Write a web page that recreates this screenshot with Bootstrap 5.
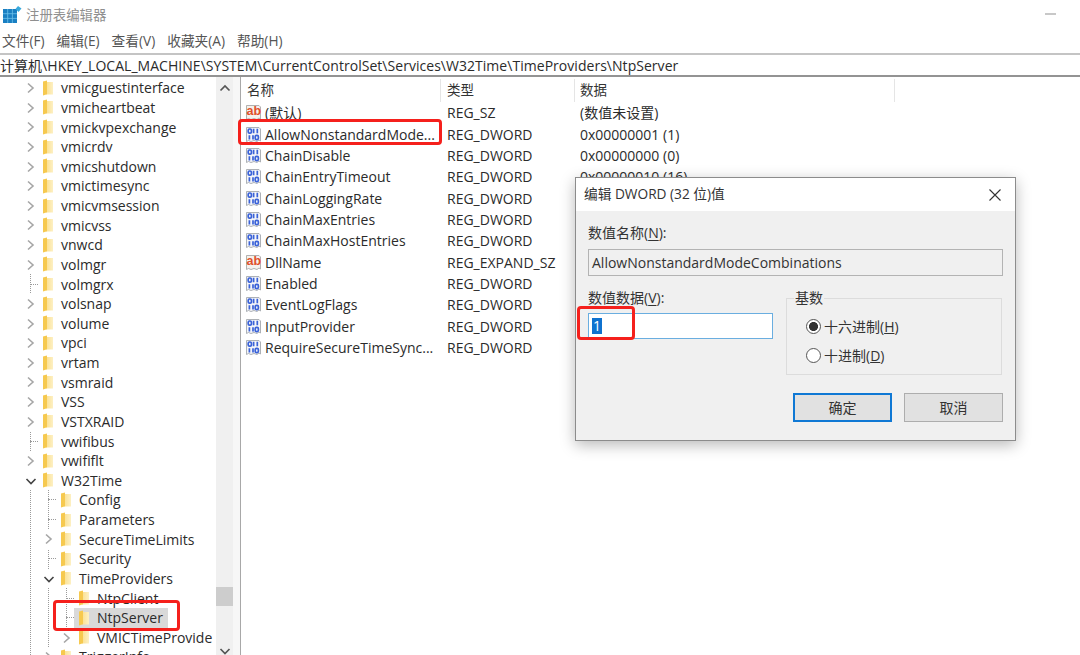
<!DOCTYPE html>
<html lang="zh">
<head>
<meta charset="utf-8">
<link href="https://cdn.jsdelivr.net/npm/bootstrap@5.3.0/dist/css/bootstrap.min.css" rel="stylesheet">
<style>
html,body{height:655px;overflow:hidden;background:#fff;}
body{font-family:"Open Sans","Noto Sans CJK SC",sans-serif;font-size:14px;color:#2b2b2b;position:relative;}
.titlebar{height:30px;padding-left:3px;color:#8f8f8f;font-size:13.4px;}
.minbtn{width:11px;border-top:2px solid #c8c8c8;margin-right:24px;margin-bottom:3px;}
.menubar{height:23px;padding-left:2px;font-size:13.7px;color:#555;gap:12px;}
.addr{height:24px;border-top:2px solid #c4c4c4;border-bottom:2px solid #939393;font-size:14px;white-space:nowrap;overflow:hidden;line-height:21px;letter-spacing:.035px;}
.main{height:578px;overflow:hidden;}
.treepane{width:216px;overflow:hidden;flex:none;padding-top:1px;}
.tgroup{margin-left:30px;border-left:1px dotted #9a9a9a;}
.tkids{margin-left:17px;border-left:1px dotted #9a9a9a;}
.trow{height:19.63px;white-space:nowrap;color:#2b2b2b;}
.twisty{width:14px;height:100%;margin-left:-7px;margin-right:5px;background:#fff;flex:none;}
.twisty.plain{background:transparent;justify-content:flex-end!important;}
.stub{display:block;width:8px;border-top:1px dotted #9a9a9a;}
.fold{width:10px;height:16px;flex:none;margin-right:8px;}
.sel-back{background:#d9d9d9;padding-left:5px;margin-left:-5px;width:94px;flex:none;}
.sbar{width:17px;background:#f0f0f0;flex:none;}
.sthumb{height:19px;background:#cdcdcd;margin-top:auto;margin-bottom:49px;}
.splitter{width:8px;flex:none;border-right:1px solid #a8a8a8;background:#f7f7f7;}
.listpane{min-width:0;padding-top:2px;}
.lhead{height:23px;color:#333;font-size:13.5px;}
.lcol1{width:200px;flex:none;padding-left:6px;border-right:1px solid #e5e5e5;}
.lcol2{width:134px;flex:none;padding-left:6px;border-right:1px solid #e5e5e5;}
.lcol3{width:320px;flex:none;padding-left:5px;border-right:1px solid #e5e5e5;}
.lhead>div{height:100%;}
.lrow{height:21.37px;white-space:nowrap;}
.lname{width:200px;flex:none;padding-left:4px;overflow:hidden;}
.ltype{width:134px;flex:none;padding-left:6px;}
.ldata{padding-left:5px;}
.ico{width:17px;height:17px;flex:none;margin-right:3px;}
.dlg{position:absolute;left:575px;top:177px;width:441px;height:264px;background:#f0f0f0;border:1px solid #8c8c8c;box-shadow:0 4px 14px rgba(0,0,0,.28);font-size:14px;color:#333;}
.dlg-title{height:33px;background:#fff;padding:0 14px 0 8px;font-size:13.7px;flex:none;}
.dlg-body{padding:13px 12px 0;}
.lab{font-size:14px;line-height:18px;}
.lab u{text-underline-offset:2px;}
.fname{height:27px;border:1px solid #b3b3b3;background:#f0f0f0;padding-left:3px;line-height:25px;margin-top:7px;}
.valrow{margin-top:13px;}
.fval{width:185px;height:26px;border:1px solid #6aaee0;background:#fff;padding-left:3px;margin-top:6px;}
.hi{background:#0f72cf;color:#fff;line-height:16px;padding:0 1px;}
.basebox{width:216px;height:77px;border:1px solid #dcdcdc;position:relative;margin-left:13px;margin-top:9px;padding:12.5px 0 0 19px;}
.baselegend{position:absolute;left:7px;top:-9px;background:#f0f0f0;padding:0 1px;font-size:14px;line-height:16px;}
.rad{height:29px;font-size:14px;gap:3px;}
.dot{width:15px;height:15px;border-radius:50%;border:1px solid #555;background:#fff;flex:none;}
.dot.on{background:radial-gradient(circle,#333 0 4.2px,#fff 4.8px);}
.btnrow{margin-top:18px;gap:12px;}
.dbtn{width:99px;height:29px;background:#e1e1e1;border:1px solid #adadad;font-size:14px;}
.dbtn.pri{border:2px solid #0f78d4;}
.redbox{position:absolute;border:3px solid #f5201c;border-radius:4px;pointer-events:none;}
</style>
</head>
<body>
<svg width="0" height="0" class="d-block position-absolute">
<defs>
<linearGradient id="fg" x1="0" x2="1" y1="0" y2="0"><stop offset="0" stop-color="#fbe08f"/><stop offset="1" stop-color="#fdf0c4"/></linearGradient>
<symbol id="folder" viewBox="0 0 10 16"><rect x="3" y="2" width="7" height="12.5" fill="url(#fg)"/><path d="M0 1.5 L4 .5 V14.2 L0 15.5Z" fill="#f6c94f"/></symbol>
<symbol id="chr" viewBox="0 0 14 20"><path d="M4 5.5 L9 10 L4 14.5" fill="none" stroke="#a6a6a6" stroke-width="1.6"/></symbol>
<symbol id="chd" viewBox="0 0 14 20"><path d="M2.5 8 L7 12.5 L11.5 8" fill="none" stroke="#444" stroke-width="1.6"/></symbol>
<symbol id="bin" viewBox="0 0 17 17"><path d="M1.5 1.5 H14 L15.5 3 V15 L14 14 L12 15.5 L9 14.5 L6 15.5 L3.5 14.5 L1.5 15.5Z" fill="#f4f5f8" stroke="#a4a8ae" stroke-width=".9"/><g fill="none" stroke="#3a62d8" stroke-width="1.7"><rect x="3.2" y="3" width="3.2" height="4.2" rx="1.3"/><path d="M8.6 2.8 V7.3 M12.3 2.8 V7.3"/><path d="M4.4 9.3 V13.6 M8 9.3 V13.6"/><rect x="10.2" y="9.4" width="3.2" height="4.2" rx="1.3"/></g></symbol>
<symbol id="ab" viewBox="0 0 17 17"><path d="M1.5 1.5 H14 L15.5 3 V15 L14 14 L12 15.5 L9 14.5 L6 15.5 L3.5 14.5 L1.5 15.5Z" fill="#f4f1ee" stroke="#a8a8a8" stroke-width=".9"/><text x="1.6" y="10.5" font-family="Liberation Sans,sans-serif" font-size="12.5" font-weight="700" fill="#e0502a">ab</text></symbol>
</defs>
</svg>

<div class="titlebar d-flex align-items-center">
<svg width="19" height="20" viewBox="0 0 19 20" class="me-1 flex-none"><rect x="0" y="4" width="14" height="14" fill="#1a7fc2"/><path d="M4.7 4 V18 M9.4 4 V18 M0 8.7 H14 M0 13.4 H14" stroke="#6cc0ea" stroke-width=".8"/><path d="M15 1 L18.5 3.5 L15.5 7 L12.5 4Z" fill="#38a9dc"/></svg>
<span>注册表编辑器</span>
<span class="ms-auto d-block minbtn"></span>
</div>
<div class="menubar d-flex align-items-center">
<span>文件(F)</span><span>编辑(E)</span><span>查看(V)</span><span>收藏夹(A)</span><span>帮助(H)</span>
</div>
<div class="addr">计算机\HKEY_LOCAL_MACHINE\SYSTEM\CurrentControlSet\Services\W32Time\TimeProviders\NtpServer</div>

<div class="main d-flex">
<div class="treepane">
<div class="tgroup">
<div class="trow d-flex align-items-center"><span class="twisty d-flex"><svg width="14" height="20"><use href="#chr"/></svg></span><svg class="fold"><use href="#folder"/></svg>vmicguestinterface</div>
<div class="trow d-flex align-items-center"><span class="twisty d-flex"><svg width="14" height="20"><use href="#chr"/></svg></span><svg class="fold"><use href="#folder"/></svg>vmicheartbeat</div>
<div class="trow d-flex align-items-center"><span class="twisty d-flex"><svg width="14" height="20"><use href="#chr"/></svg></span><svg class="fold"><use href="#folder"/></svg>vmickvpexchange</div>
<div class="trow d-flex align-items-center"><span class="twisty d-flex"><svg width="14" height="20"><use href="#chr"/></svg></span><svg class="fold"><use href="#folder"/></svg>vmicrdv</div>
<div class="trow d-flex align-items-center"><span class="twisty d-flex"><svg width="14" height="20"><use href="#chr"/></svg></span><svg class="fold"><use href="#folder"/></svg>vmicshutdown</div>
<div class="trow d-flex align-items-center"><span class="twisty d-flex"><svg width="14" height="20"><use href="#chr"/></svg></span><svg class="fold"><use href="#folder"/></svg>vmictimesync</div>
<div class="trow d-flex align-items-center"><span class="twisty d-flex"><svg width="14" height="20"><use href="#chr"/></svg></span><svg class="fold"><use href="#folder"/></svg>vmicvmsession</div>
<div class="trow d-flex align-items-center"><span class="twisty d-flex"><svg width="14" height="20"><use href="#chr"/></svg></span><svg class="fold"><use href="#folder"/></svg>vmicvss</div>
<div class="trow d-flex align-items-center"><span class="twisty d-flex"><svg width="14" height="20"><use href="#chr"/></svg></span><svg class="fold"><use href="#folder"/></svg>vnwcd</div>
<div class="trow d-flex align-items-center"><span class="twisty d-flex"><svg width="14" height="20"><use href="#chr"/></svg></span><svg class="fold"><use href="#folder"/></svg>volmgr</div>
<div class="trow d-flex align-items-center"><span class="twisty plain d-flex align-items-center"><span class="stub"></span></span><svg class="fold"><use href="#folder"/></svg>volmgrx</div>
<div class="trow d-flex align-items-center"><span class="twisty d-flex"><svg width="14" height="20"><use href="#chr"/></svg></span><svg class="fold"><use href="#folder"/></svg>volsnap</div>
<div class="trow d-flex align-items-center"><span class="twisty d-flex"><svg width="14" height="20"><use href="#chr"/></svg></span><svg class="fold"><use href="#folder"/></svg>volume</div>
<div class="trow d-flex align-items-center"><span class="twisty d-flex"><svg width="14" height="20"><use href="#chr"/></svg></span><svg class="fold"><use href="#folder"/></svg>vpci</div>
<div class="trow d-flex align-items-center"><span class="twisty d-flex"><svg width="14" height="20"><use href="#chr"/></svg></span><svg class="fold"><use href="#folder"/></svg>vrtam</div>
<div class="trow d-flex align-items-center"><span class="twisty d-flex"><svg width="14" height="20"><use href="#chr"/></svg></span><svg class="fold"><use href="#folder"/></svg>vsmraid</div>
<div class="trow d-flex align-items-center"><span class="twisty d-flex"><svg width="14" height="20"><use href="#chr"/></svg></span><svg class="fold"><use href="#folder"/></svg>VSS</div>
<div class="trow d-flex align-items-center"><span class="twisty d-flex"><svg width="14" height="20"><use href="#chr"/></svg></span><svg class="fold"><use href="#folder"/></svg>VSTXRAID</div>
<div class="trow d-flex align-items-center"><span class="twisty plain d-flex align-items-center"><span class="stub"></span></span><svg class="fold"><use href="#folder"/></svg>vwifibus</div>
<div class="trow d-flex align-items-center"><span class="twisty d-flex"><svg width="14" height="20"><use href="#chr"/></svg></span><svg class="fold"><use href="#folder"/></svg>vwififlt</div>
<div class="trow d-flex align-items-center"><span class="twisty d-flex"><svg width="14" height="20"><use href="#chd"/></svg></span><svg class="fold"><use href="#folder"/></svg>W32Time</div>
<div class="tkids">
<div class="trow d-flex align-items-center"><span class="twisty plain d-flex align-items-center"><span class="stub"></span></span><svg class="fold"><use href="#folder"/></svg>Config</div>
<div class="trow d-flex align-items-center"><span class="twisty plain d-flex align-items-center"><span class="stub"></span></span><svg class="fold"><use href="#folder"/></svg>Parameters</div>
<div class="trow d-flex align-items-center"><span class="twisty d-flex"><svg width="14" height="20"><use href="#chr"/></svg></span><svg class="fold"><use href="#folder"/></svg>SecureTimeLimits</div>
<div class="trow d-flex align-items-center"><span class="twisty plain d-flex align-items-center"><span class="stub"></span></span><svg class="fold"><use href="#folder"/></svg>Security</div>
<div class="trow d-flex align-items-center"><span class="twisty d-flex"><svg width="14" height="20"><use href="#chd"/></svg></span><svg class="fold"><use href="#folder"/></svg>TimeProviders</div>
<div class="tkids">
<div class="trow d-flex align-items-center"><span class="twisty plain d-flex align-items-center"><span class="stub"></span></span><svg class="fold"><use href="#folder"/></svg>NtpClient</div>
<div class="trow d-flex align-items-center"><span class="twisty plain d-flex align-items-center"><span class="stub"></span></span><span class="sel-back d-flex align-items-center h-100"><svg class="fold"><use href="#folder"/></svg>NtpServer</span></div>
<div class="trow d-flex align-items-center"><span class="twisty d-flex"><svg width="14" height="20"><use href="#chr"/></svg></span><svg class="fold"><use href="#folder"/></svg>VMICTimeProvide</div>
</div>
<div class="trow d-flex align-items-center"><span class="twisty d-flex"><svg width="14" height="20"><use href="#chr"/></svg></span><svg class="fold"><use href="#folder"/></svg>TriggerInfo</div>
</div>
</div>
</div>
<div class="sbar d-flex flex-column align-items-center">
<svg width="12" height="21" viewBox="0 0 12 21" class="flex-none"><path d="M1.5 13.5 L6 9 L10.5 13.5" fill="none" stroke="#555" stroke-width="1.7"/></svg>
<div class="sthumb w-100"></div>
<svg width="12" height="9" viewBox="0 0 12 9" class="flex-none position-absolute" style="bottom:0"><path d="M1.5 3 L6 7.5 L10.5 3" fill="none" stroke="#555" stroke-width="1.7"/></svg>
</div>
<div class="splitter"></div>
<div class="listpane flex-grow-1">
<div class="lhead d-flex align-items-center">
<div class="lcol1 d-flex align-items-center">名称</div>
<div class="lcol2 d-flex align-items-center">类型</div>
<div class="lcol3 d-flex align-items-center">数据</div>
</div>
<div class="lrow d-flex align-items-center"><div class="lname d-flex align-items-center"><svg class="ico"><use href="#ab"/></svg>(默认)</div><div class="ltype">REG_SZ</div><div class="ldata">(数值未设置)</div></div>
<div class="lrow d-flex align-items-center"><div class="lname d-flex align-items-center"><svg class="ico"><use href="#bin"/></svg>AllowNonstandardMode...</div><div class="ltype">REG_DWORD</div><div class="ldata">0x00000001 (1)</div></div>
<div class="lrow d-flex align-items-center"><div class="lname d-flex align-items-center"><svg class="ico"><use href="#bin"/></svg>ChainDisable</div><div class="ltype">REG_DWORD</div><div class="ldata">0x00000000 (0)</div></div>
<div class="lrow d-flex align-items-center"><div class="lname d-flex align-items-center"><svg class="ico"><use href="#bin"/></svg>ChainEntryTimeout</div><div class="ltype">REG_DWORD</div><div class="ldata">0x00000010 (16)</div></div>
<div class="lrow d-flex align-items-center"><div class="lname d-flex align-items-center"><svg class="ico"><use href="#bin"/></svg>ChainLoggingRate</div><div class="ltype">REG_DWORD</div></div>
<div class="lrow d-flex align-items-center"><div class="lname d-flex align-items-center"><svg class="ico"><use href="#bin"/></svg>ChainMaxEntries</div><div class="ltype">REG_DWORD</div></div>
<div class="lrow d-flex align-items-center"><div class="lname d-flex align-items-center"><svg class="ico"><use href="#bin"/></svg>ChainMaxHostEntries</div><div class="ltype">REG_DWORD</div></div>
<div class="lrow d-flex align-items-center"><div class="lname d-flex align-items-center"><svg class="ico"><use href="#ab"/></svg>DllName</div><div class="ltype">REG_EXPAND_SZ</div></div>
<div class="lrow d-flex align-items-center"><div class="lname d-flex align-items-center"><svg class="ico"><use href="#bin"/></svg>Enabled</div><div class="ltype">REG_DWORD</div></div>
<div class="lrow d-flex align-items-center"><div class="lname d-flex align-items-center"><svg class="ico"><use href="#bin"/></svg>EventLogFlags</div><div class="ltype">REG_DWORD</div></div>
<div class="lrow d-flex align-items-center"><div class="lname d-flex align-items-center"><svg class="ico"><use href="#bin"/></svg>InputProvider</div><div class="ltype">REG_DWORD</div></div>
<div class="lrow d-flex align-items-center"><div class="lname d-flex align-items-center"><svg class="ico"><use href="#bin"/></svg>RequireSecureTimeSync...</div><div class="ltype">REG_DWORD</div></div>
</div>
</div>

<div class="dlg d-flex flex-column">
<div class="dlg-title d-flex align-items-center justify-content-between">
<span>编辑 DWORD (32 位)值</span>
<svg width="12" height="12" viewBox="0 0 12 12"><path d="M.5 .5 L11.5 11.5 M11.5 .5 L.5 11.5" stroke="#333" stroke-width="1.1"/></svg>
</div>
<div class="dlg-body">
<div class="lab">数值名称(<u>N</u>):</div>
<div class="fname">AllowNonstandardModeCombinations</div>
<div class="d-flex valrow">
<div>
<div class="lab">数值数据(<u>V</u>):</div>
<div class="fval d-flex align-items-center"><span class="hi">1</span></div>
</div>
<div class="basebox">
<div class="baselegend">基数</div>
<div class="rad d-flex align-items-center"><span class="dot on"></span><span>十六进制(<u>H</u>)</span></div>
<div class="rad d-flex align-items-center"><span class="dot"></span><span>十进制(<u>D</u>)</span></div>
</div>
</div>
<div class="d-flex justify-content-end btnrow">
<div class="dbtn pri d-flex align-items-center justify-content-center">确定</div>
<div class="dbtn d-flex align-items-center justify-content-center">取消</div>
</div>
</div>
</div>

<div class="redbox" style="left:238px;top:119px;width:204px;height:26px"></div>
<div class="redbox" style="left:577px;top:306px;width:58px;height:34px"></div>
<div class="redbox" style="left:53px;top:600px;width:127px;height:31px"></div>
<script src="https://cdn.jsdelivr.net/npm/bootstrap@5.3.0/dist/js/bootstrap.bundle.min.js"></script>
</body>
</html>
